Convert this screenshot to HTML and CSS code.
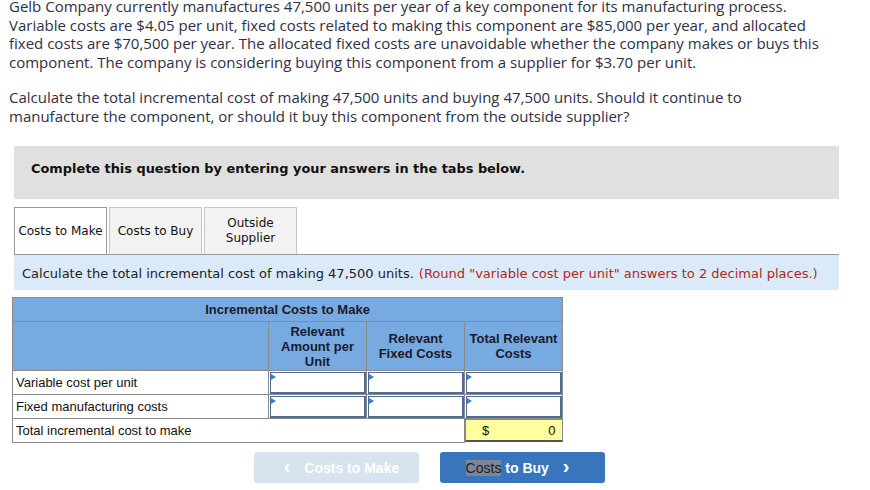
FILE: index.html
```html
<!DOCTYPE html>
<html lang="en">

<head>
    <meta charset="UTF-8">
    <meta name="viewport" content="width=device-width, initial-scale=1.0">
    <title>Costs to Make</title>
    <link rel="stylesheet" href="styles.css">
</head>

<body>
    <div class="question">
        <p class="intro intro-first">Gelb Company currently manufactures 47,500 units per year of a key component for its manufacturing process. Variable costs are $4.05 per unit, fixed costs related to making this component are $85,000 per year, and allocated fixed costs are $70,500 per year. The allocated fixed costs are unavoidable whether the company makes or buys this component. The company is considering buying this component from a supplier for $3.70 per unit.</p>
        <p class="intro">Calculate the total incremental cost of making 47,500 units and buying 47,500 units. Should it continue to manufacture the component, or should it buy this component from the outside supplier?</p>

        <div class="instructions">Complete this question by entering your answers in the tabs below.</div>

        <div class="tabs">
            <div class="tab tab-active">Costs to Make</div>
            <div class="tab">Costs to Buy</div>
            <div class="tab">Outside<br>Supplier</div>
        </div>

        <div class="panel-note">
            Calculate the total incremental cost of making 47,500 units.
            <span class="hint">(Round "variable cost per unit" answers to 2 decimal places.)</span>
        </div>

        <table class="costs">
            <tr>
                <th colspan="4" class="caption">Incremental Costs to Make</th>
            </tr>
            <tr class="col-heads">
                <th class="col-label"></th>
                <th class="col-num">Relevant Amount per Unit</th>
                <th class="col-num">Relevant Fixed Costs</th>
                <th class="col-num">Total Relevant Costs</th>
            </tr>
            <tr>
                <td>Variable cost per unit</td>
                <td class="entry"><input type="text"></td>
                <td class="entry"><input type="text"></td>
                <td class="entry"><input type="text"></td>
            </tr>
            <tr>
                <td>Fixed manufacturing costs</td>
                <td class="entry"><input type="text"></td>
                <td class="entry"><input type="text"></td>
                <td class="entry"><input type="text"></td>
            </tr>
            <tr>
                <td colspan="3">Total incremental cost to make</td>
                <td class="total"><span>$</span><span>0</span></td>
            </tr>
        </table>

        <div class="nav">
            <button class="btn btn-disabled"><span class="chev">&lsaquo;</span> Costs to Make</button>
            <button class="btn btn-next"><span class="selected">Costs</span> to Buy <span class="chev">&rsaquo;</span></button>
        </div>
    </div>
</body>

</html>
```

FILE: styles.css
```css
*,
html,
body {
    margin: 0;
    padding: 0;
    box-sizing: border-box;
}

body {
    background: #fff;
    font-family: "Open Sans", "Lato", sans-serif;
    overflow: hidden;
}

.question {
    padding-left: 9px;
}

.intro {
    width: 820px;
    font-size: 15px;
    line-height: 18.7px;
    color: #2f2f45;
    margin-bottom: 16px;
}

.intro-first {
    margin-top: -3px;
}

.instructions {
    width: 825px;
    height: 53px;
    margin: 21px 0 0 5px;
    padding: 15px 0 0 17px;
    background: #e0e0e0;
    font-family: "DejaVu Sans", Verdana, sans-serif;
    font-size: 12.9px;
    font-weight: 700;
    color: #111;
}

.tabs {
    display: flex;
    gap: 2px;
    margin: 8px 0 0 5px;
}

.tab {
    width: 93px;
    height: 47px;
    display: flex;
    align-items: center;
    justify-content: center;
    text-align: center;
    background: #f2f2f2;
    border: 1px solid #c8c8c8;
    border-bottom: 0;
    font-family: "DejaVu Sans", Verdana, sans-serif;
    font-size: 12px;
    line-height: 15px;
    color: #111;
}

.tab-active {
    background: #fff;
    border-color: #999;
}

.panel-note {
    width: 825px;
    height: 36px;
    margin-left: 5px;
    padding: 1px 0 0 8px;
    display: flex;
    align-items: center;
    gap: 5px;
    background: #dbeaf8;
    border-top: 1px solid #999;
    font-family: "DejaVu Sans", Verdana, sans-serif;
    font-size: 13px;
    color: #222;
}

.hint {
    color: #b0281c;
}

.costs {
    margin: 7px 0 0 3px;
    border-collapse: collapse;
    font-family: "Liberation Sans", Arial, sans-serif;
    font-size: 13px;
    color: #111;
}

.costs th,
.costs td {
    border: 1px solid #8a8a8a;
}

.costs th {
    background: #78aae2;
    color: #1a1a2a;
    font-weight: 700;
    line-height: 15px;
}

.caption {
    height: 24px;
}

.col-heads th {
    height: 49px;
}

.col-label {
    width: 256px;
}

.col-num {
    width: 98px;
    padding: 0 4px;
}

.costs td {
    height: 23px;
    padding: 0 3px;
    background: #fff;
}

.costs td.entry {
    padding: 1px 0 0 1px;
    position: relative;
}

.entry input {
    display: block;
    width: 96px;
    height: 22px;
    border: 2px solid #4d6c98;
    border-top-width: 1px;
    border-left-width: 1px;
    outline: none;
}

.entry::before {
    content: "";
    position: absolute;
    left: 2px;
    top: 3px;
    border-left: 5px solid #3c7bd0;
    border-top: 3px solid transparent;
    border-bottom: 3px solid transparent;
}

.costs td.total {
    background: #ffff9f;
    border-bottom: 2px solid #555;
    padding: 0 6px 0 16px;
}

.total {
    display: flex;
    justify-content: space-between;
    align-items: center;
}

.nav {
    display: flex;
    gap: 21px;
    margin: 9px 0 0 245px;
}

.btn {
    width: 165px;
    height: 31px;
    border: 0;
    border-radius: 3px;
    font-family: "Liberation Sans", Arial, sans-serif;
    font-size: 14px;
    font-weight: 700;
    color: #fff;
    cursor: pointer;
}

.btn-disabled {
    background: #d8e3f0;
    cursor: default;
}

.btn-next {
    background: #3975bc;
}

.chev {
    font-size: 20px;
    line-height: 14px;
    margin: 0 10px;
}

.selected {
    background: #7b8796;
    color: #202020;
    font-weight: 400;
}
```
